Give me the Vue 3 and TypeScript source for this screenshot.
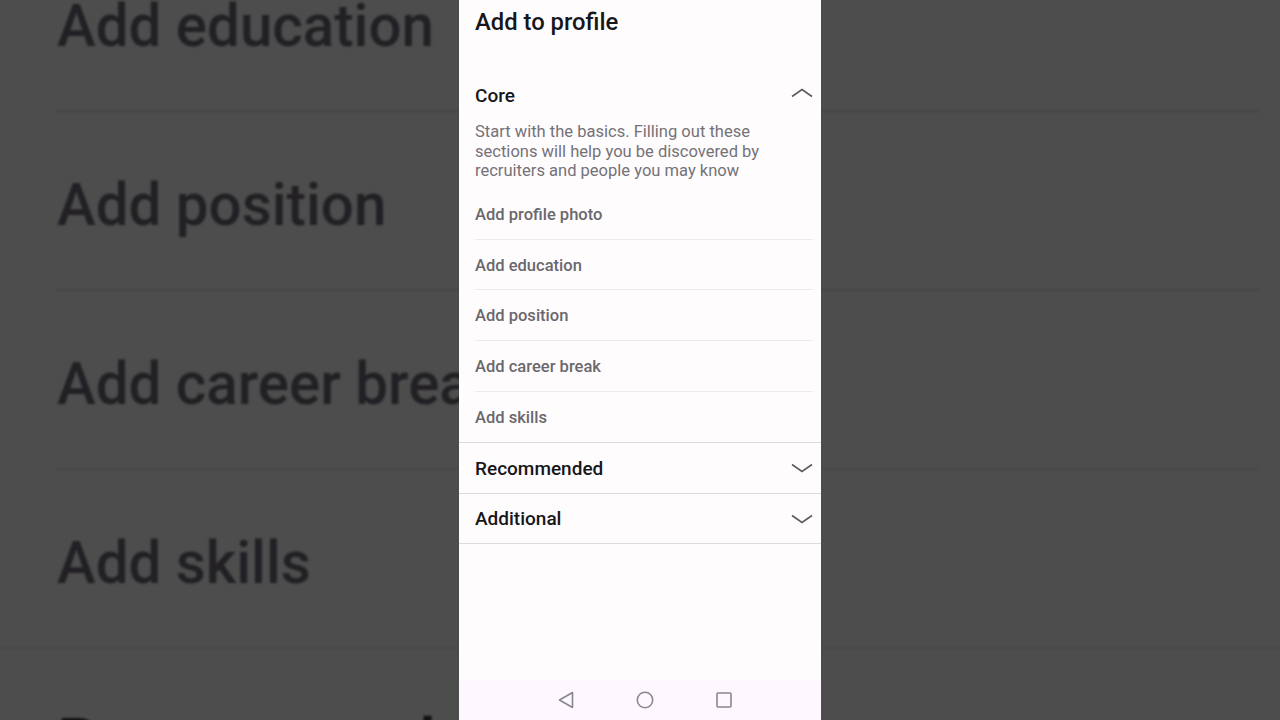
<script setup lang="ts">
const coreItems: string[] = ['Add profile photo', 'Add education', 'Add position', 'Add career break', 'Add skills']
const collapsed: string[] = ['Recommended', 'Additional']
const blurredRows: string[] = ['Add education', 'Add position', 'Add career break', 'Add skills']
</script>

<template>
  <div class="stage">
    <div class="side side-left">
      <div class="ghost-list">
        <div v-for="row in blurredRows" :key="row" class="ghost-row">
          <span class="ghost-text">{{ row }}</span>
        </div>
        <div class="ghost-next">Recommended</div>
      </div>
    </div>

    <main class="sheet">
      <h1 class="title">Add to profile</h1>

      <section class="core">
        <div class="head head-core">
          <span>Core</span>
          <svg class="chev chev-up" viewBox="0 0 22 10" aria-hidden="true"><path d="M1 8.5 L11 1.5 L21 8.5" /></svg>
        </div>
        <p class="desc">Start with the basics. Filling out these sections will help you be discovered by recruiters and people you may know</p>
        <ul class="items">
          <li v-for="item in coreItems" :key="item" class="item"><span>{{ item }}</span></li>
        </ul>
      </section>

      <section v-for="name in collapsed" :key="name" class="head head-row">
        <span>{{ name }}</span>
        <svg class="chev" viewBox="0 0 22 10" aria-hidden="true"><path d="M1 1.5 L11 8.5 L21 1.5" /></svg>
      </section>

      <div class="spacer"></div>

      <nav class="navbar">
        <svg class="nav-icon" viewBox="0 0 18 18" aria-hidden="true"><path d="M15.5 1.5 V16.5 L2.5 9 Z" /></svg>
        <svg class="nav-icon" viewBox="0 0 18 18" aria-hidden="true"><circle cx="9" cy="9" r="7.7" /></svg>
        <svg class="nav-icon" viewBox="0 0 18 18" aria-hidden="true"><rect x="2" y="2" width="14" height="14" rx="1" /></svg>
      </nav>
    </main>

    <div class="side side-right">
      <div class="ghost-list">
        <div v-for="row in blurredRows" :key="row" class="ghost-row"></div>
      </div>
    </div>
  </div>
</template>

<style scoped>
.stage {
  display: flex;
  width: 1280px;
  height: 720px;
  overflow: hidden;
  background: #4d4d4d;
  font-family: Roboto, "Liberation Sans", sans-serif;
}
.side {
  flex: 1 1 0;
  min-width: 0;
  overflow: hidden;
  white-space: nowrap;
}
.ghost-list {
  margin-top: -67px;
  filter: blur(1px);
}
.side-left .ghost-list {
  padding-left: 57px;
}
.side-right .ghost-list {
  padding-right: 22px;
}
.ghost-row {
  box-sizing: border-box;
  height: 179px;
  display: flex;
  align-items: flex-end;
  padding-bottom: 51px;
  border-bottom: 2px solid #484548;
}
.ghost-text {
  font-size: 58.3px;
  font-weight: 500;
  line-height: 66px;
  color: #222024;
}
.side-left .ghost-row:nth-child(4) {
  margin-left: -57px;
  padding-left: 57px;
  border-bottom-color: #4a4547;
}
.side-right .ghost-row:nth-child(4) {
  margin-right: -22px;
  border-bottom-color: #4a4547;
}
.ghost-next {
  margin-top: 59px;
  font-size: 67px;
  font-weight: 500;
  line-height: 70px;
  color: #121114;
}
.sheet {
  flex: 0 0 362px;
  height: 720px;
  display: flex;
  flex-direction: column;
  background: #fffcfe;
}
.title {
  margin: 0;
  padding: 8px 16px 0;
  font-size: 23.8px;
  line-height: 28px;
  font-weight: 480;
  color: #17161a;
}
.core {
  margin-top: 43px;
  border-bottom: 1px solid #dddcdd;
}
.head {
  display: flex;
  align-items: center;
  justify-content: space-between;
  padding: 0 8px 0 16px;
  font-size: 19px;
  font-weight: 465;
  color: #17161a;
}
.head-core {
  height: 32px;
}
.head-row {
  height: 49.5px;
  padding-top: 0.5px;
  box-sizing: content-box;
  margin-top: -0.5px;
  border-bottom: 1px solid #dddcdd;
}
.chev {
  width: 22px;
  height: 10px;
  fill: none;
  stroke: #5d5b60;
  stroke-width: 1.6;
}
.chev-up {
  margin-bottom: 4px;
}
.desc {
  margin: 11px 0 0;
  padding: 0 40px 0 16px;
  font-size: 16.55px;
  line-height: 19.6px;
  color: #747277;
}
.items {
  list-style: none;
  margin: 8.2px 0 0;
  padding: 0 8px 0 16px;
}
.item {
  box-sizing: border-box;
  height: 50.7px;
  padding-top: 1px;
  display: flex;
  align-items: center;
  font-size: 16.55px;
  font-weight: 470;
  color: #6a686d;
  border-bottom: 1px solid #ececec;
}
.item:last-child {
  border-bottom: none;
}
.spacer {
  flex: 1;
}
.navbar {
  height: 40px;
  padding-left: 9px;
  display: flex;
  align-items: center;
  justify-content: center;
  gap: 61px;
  background: #fdf7fe;
}
.nav-icon {
  width: 18px;
  height: 18px;
  fill: none;
  stroke: #8b878e;
  stroke-width: 1.6;
  stroke-linejoin: round;
}
</style>

<style>
html, body {
  margin: 0;
  background: #4d4d4d;
}
</style>
